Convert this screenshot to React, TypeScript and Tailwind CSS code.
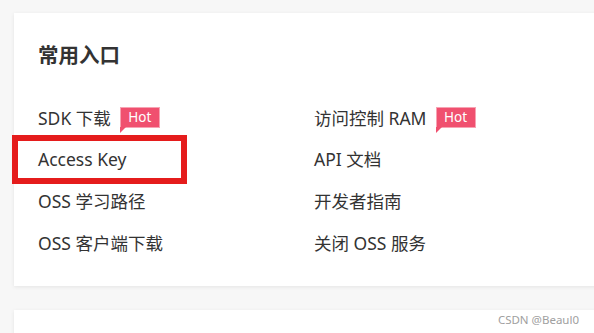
const left = [
  { label: "SDK 下载", hot: true },
  { label: "Access Key" },
  { label: "OSS 学习路径" },
  { label: "OSS 客户端下载" },
];

const right = [
  { label: "访问控制 RAM", hot: true },
  { label: "API 文档" },
  { label: "开发者指南" },
  { label: "关闭 OSS 服务" },
];

function HotTag() {
  return (
    <span className="relative ml-[9px] inline-flex h-[21px] w-[40px] items-center justify-center border border-[#f7a3b3] bg-[#f0506f] text-[13.5px] leading-none text-white">
      Hot
      <span className="absolute left-[-1px] top-full h-0 w-0 border-r-[6px] border-t-[6px] border-r-transparent border-t-[#f0506f]" />
    </span>
  );
}

function Entry({ label, hot }: { label: string; hot?: boolean }) {
  return (
    <div className="flex h-[41.7px] items-center text-[17.5px] text-[#333]">
      <span>{label}</span>
      {hot && <HotTag />}
    </div>
  );
}

export default function App() {
  return (
    <div
      className="relative h-[333px] w-[594px] overflow-hidden bg-[#f7f7f7]"
      style={{ fontFamily: '"Noto Sans", "Noto Sans CJK SC", sans-serif' }}
    >
      <div className="ml-[14px] mt-[13px] h-[273px] w-[620px] bg-white px-[24px] pt-[28px] shadow-[0_1px_4px_rgba(0,0,0,0.08)]">
        <h2 className="text-[20.5px] font-bold leading-[28px] text-[#333]">常用入口</h2>
        <div className="mt-[28px] grid grid-cols-[276px_1fr]">
          <div>
            {left.map((e) => (
              <Entry key={e.label} {...e} />
            ))}
          </div>
          <div>
            {right.map((e) => (
              <Entry key={e.label} {...e} />
            ))}
          </div>
        </div>
      </div>
      <div className="ml-[14px] mt-[24px] h-[40px] w-[620px] bg-white shadow-[0_1px_4px_rgba(0,0,0,0.08)]" />

      <div className="absolute left-[12px] top-[135px] h-[49px] w-[175px] border-[6px] border-[#e51c1c]" />
      <div className="absolute right-[15px] top-[311px] text-[11.5px] text-[#a0a0a0]">CSDN @Beaul0</div>
    </div>
  );
}
